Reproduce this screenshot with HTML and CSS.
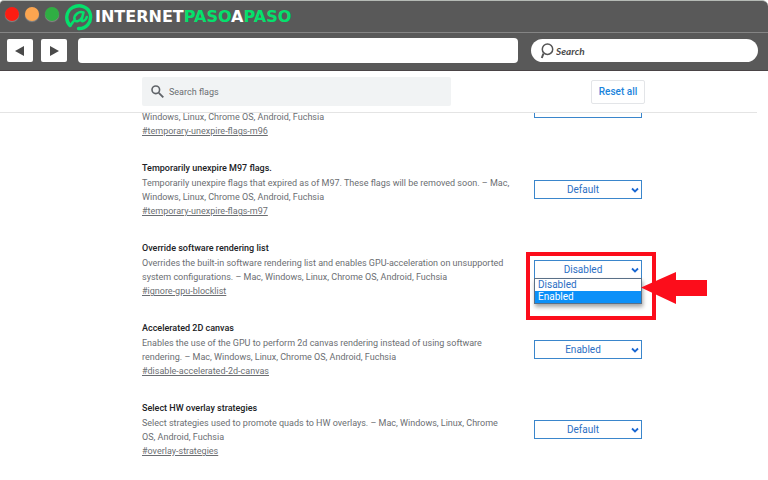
FILE: index.html
```
<!DOCTYPE html>
<html lang="en">
  <head>
    <meta charset="UTF-8" />
    <meta name="viewport" content="width=device-width, initial-scale=1.0" />
    <title>Experiments</title>
    <link rel="stylesheet" href="styles.css">
  </head>
  <body>
    <div class="browser">
      <div class="title-bar">
        <span class="dot red"></span>
        <span class="dot orange"></span>
        <span class="dot green"></span>
        <svg class="logo" viewBox="0 0 28 28" fill="none" stroke="#05e06c" stroke-linecap="round" stroke-linejoin="round">
          <path stroke-width="3.4" d="M5 22.500C0 17.500.8 8.500 7.500 4.600 14.500.8 23.500 3.400 25.300 11.200 27 19.500 21 25.800 13.500 25.500" />
          <path stroke-width="2.600" d="M18.500 9.500C14 7.500 9 11.800 9.400 16c.5 3.800 5.300 2.600 7.800-1.500l1.300-5-2 7.300c-.3 2.500 4.200 1.400 5.300-2.800M8.300 18.500L5.500 22.500" />
        </svg>
        <div class="brand">INTERNET<span class="paso">PASO</span>A<span class="paso">PASO</span></div>
      </div>
      <div class="nav-bar">
        <button class="nav-button" aria-label="Back">
          <svg viewBox="0 0 10 10"><path d="M0 5l9-5v10z" /></svg>
        </button>
        <button class="nav-button" aria-label="Forward">
          <svg viewBox="0 0 10 10"><path d="M10 5L1 0v10z" /></svg>
        </button>
        <input type="text" class="address" aria-label="Address" />
        <label class="web-search">
          <svg viewBox="0 0 14 16" fill="none" stroke="#555" stroke-width="1.5"><circle cx="7.500" cy="6.200" r="5.200" /><path stroke-width="2" d="M3.500 10.500L1.800 15" /></svg>
          <input type="text" placeholder="Search" aria-label="Search the web" />
        </label>
      </div>
    </div>

    <header class="flags-header">
      <label class="flags-search">
        <svg viewBox="0 0 13 13" fill="none" stroke="#5f6368" stroke-width="1.600"><circle cx="4.800" cy="4.800" r="3.800" /><path stroke-width="1.900" d="M7.800 7.800l4.500 4.500" /></svg>
        <input type="text" placeholder="Search flags" aria-label="Search flags" />
      </label>
      <button class="reset">Reset all</button>
    </header>

    <main class="flags">
      <div class="flag-list">
        <section class="flag scrolled">
          <div class="info">
            <p>Windows, Linux, Chrome OS, Android, Fuchsia</p>
            <a href="#temporary-unexpire-flags-m96">#temporary-unexpire-flags-m96</a>
          </div>
          <div class="picker">
            <select aria-label="Temporarily unexpire M96 flags"><option>Default</option><option>Enabled</option><option>Disabled</option></select>
          </div>
        </section>

        <section class="flag">
          <div class="info">
            <h2>Temporarily unexpire M97 flags.</h2>
            <p>Temporarily unexpire flags that expired as of M97. These flags will be removed soon. – Mac,<br />Windows, Linux, Chrome OS, Android, Fuchsia</p>
            <a href="#temporary-unexpire-flags-m97">#temporary-unexpire-flags-m97</a>
          </div>
          <div class="picker">
            <select aria-label="Temporarily unexpire M97 flags"><option>Default</option><option>Enabled</option><option>Disabled</option></select>
            <svg class="chevron" viewBox="0 0 8 6"><path d="M1 1.500l3 3 3-3" /></svg>
          </div>
        </section>

        <section class="flag">
          <div class="info">
            <h2>Override software rendering list</h2>
            <p>Overrides the built-in software rendering list and enables GPU-acceleration on unsupported<br />system configurations. – Mac, Windows, Linux, Chrome OS, Android, Fuchsia</p>
            <a href="#ignore-gpu-blocklist">#ignore-gpu-blocklist</a>
          </div>
          <div class="picker">
            <select aria-label="Override software rendering list"><option>Disabled</option><option>Enabled</option></select>
            <svg class="chevron" viewBox="0 0 8 6"><path d="M1 1.500l3 3 3-3" /></svg>
            <ul class="menu">
              <li>Disabled</li>
              <li class="active">Enabled</li>
            </ul>
            <div class="highlight"></div>
            <svg class="arrow" viewBox="0 0 66 32"><path fill="#fc0d1b" d="M0 15.500L35 0v8h31v16H35v8z" /></svg>
          </div>
        </section>

        <section class="flag">
          <div class="info">
            <h2>Accelerated 2D canvas</h2>
            <p>Enables the use of the GPU to perform 2d canvas rendering instead of using software<br />rendering. – Mac, Windows, Linux, Chrome OS, Android, Fuchsia</p>
            <a href="#disable-accelerated-2d-canvas">#disable-accelerated-2d-canvas</a>
          </div>
          <div class="picker">
            <select aria-label="Accelerated 2D canvas"><option>Enabled</option><option>Disabled</option></select>
            <svg class="chevron" viewBox="0 0 8 6"><path d="M1 1.500l3 3 3-3" /></svg>
          </div>
        </section>

        <section class="flag">
          <div class="info">
            <h2>Select HW overlay strategies</h2>
            <p>Select strategies used to promote quads to HW overlays. – Mac, Windows, Linux, Chrome<br />OS, Android, Fuchsia</p>
            <a href="#overlay-strategies">#overlay-strategies</a>
          </div>
          <div class="picker">
            <select aria-label="Select HW overlay strategies"><option>Default</option><option>Enabled</option><option>Disabled</option></select>
            <svg class="chevron" viewBox="0 0 8 6"><path d="M1 1.500l3 3 3-3" /></svg>
          </div>
        </section>
      </div>
    </main>
  </body>
</html>
```
FILE: styles.css
```
* {
  box-sizing: border-box;
}

body {
  margin: 0;
  background-color: #fff;
  font-family: Roboto, Arial, sans-serif;
  font-size: 9px;
  color: #6b6e72;
}

input,
select,
button {
  font-family: inherit;
  font-size: 10px;
}

input {
  border: none;
  outline: none;
  background: none;
  padding: 0;
  min-width: 0;
}

/* browser window */
.browser {
  background-color: #595959;
  border-top: 1px solid #b5bab5;
  border-bottom: 1px solid #4a4446;
  border-radius: 4px 6px 0 0;
}

.title-bar {
  display: flex;
  align-items: center;
  height: 32px;
  padding-left: 5px;
  border-bottom: 1px solid #858585;
}

.dot {
  width: 14px;
  height: 14px;
  margin: 0 6px 6px 0;
  border-radius: 50%;
  box-shadow: 0 1px 1px #8a8a8a;
}

.red {
  background-color: #fb1d12;
}

.orange {
  background-color: #fba550;
}

.green {
  background-color: #2fae43;
}

.logo {
  width: 28px;
  height: 28px;
}

.brand {
  margin-left: 2px;
  font-family: "DejaVu Sans", sans-serif;
  font-size: 16px;
  font-weight: bold;
  color: #fff;
}

.paso {
  color: #05e06c;
}

.nav-bar {
  display: flex;
  align-items: center;
  gap: 8px;
  height: 37px;
  padding: 0 10px 2px 7px;
}

.nav-button {
  display: flex;
  align-items: center;
  justify-content: center;
  width: 26px;
  height: 23px;
  padding: 0;
  border: none;
  border-radius: 2px;
  background-color: #fff;
}

.nav-button svg {
  width: 10px;
  height: 10px;
  fill: #4a4a4a;
}

.address {
  flex: 1;
  height: 25px;
  margin: 0 5px 0 3px;
  border-radius: 4px;
  background-color: #fff;
}

.web-search {
  display: flex;
  align-items: center;
  gap: 2px;
  width: 227px;
  height: 23px;
  padding-left: 9px;
  border-radius: 12px;
  background-color: #fff;
}

.web-search svg {
  width: 14px;
  height: 16px;
}

.web-search input {
  flex: 1;
  font-family: Lato, sans-serif;
  font-style: italic;
  font-weight: bold;
}

.web-search input::placeholder {
  color: #4a4a4a;
}

/* flags page */
.flags-header {
  position: relative;
  z-index: 1;
  display: flex;
  align-items: center;
  justify-content: space-between;
  max-width: 757px;
  height: 42px;
  padding: 0 112px 0 142px;
  border-bottom: 1px solid #e4e4e4;
  background-color: #fff;
}

.flags-search {
  display: flex;
  align-items: center;
  gap: 5px;
  width: 309px;
  height: 29px;
  padding-left: 9px;
  border-radius: 2px;
  background-color: #f1f3f4;
}

.flags-search svg {
  width: 13px;
  height: 13px;
}

.flags-search input {
  flex: 1;
  font-size: 9px;
}

.flags-search input::placeholder {
  color: #6b6e72;
}

.reset {
  width: 54px;
  height: 24px;
  padding: 0;
  border: 1px solid #e3e5e8;
  border-radius: 2px;
  background-color: #fff;
  color: #1a84dc;
  font-weight: 500;
}

.flags {
  overflow: hidden;
  max-width: 757px;
  padding: 0 115px 0 142px;
}

/* scrolled a little way down */
.flag-list {
  margin-top: -3px;
}

.flag {
  display: flex;
  align-items: center;
  gap: 10px;
  padding-bottom: 21px;
}

.scrolled .picker {
  align-self: flex-start;
  margin-top: -11px;
}

.info {
  flex: 1;
}

.info h2 {
  margin: 0;
  font-size: 9px;
  line-height: 16px;
  font-weight: 500;
  color: #202124;
}

.info p {
  margin: 0;
  line-height: 14px;
}

.info a {
  display: block;
  line-height: 15px;
  color: #6b6e72;
}

.picker {
  position: relative;
  width: 108px;
}

.picker select {
  display: block;
  appearance: none;
  width: 100%;
  height: 19px;
  padding: 0 14px 0 4px;
  border: 1px solid #3a86cc;
  border-radius: 0;
  background-color: #fff;
  color: #2c6fc4;
  text-align-last: center;
}

.chevron {
  position: absolute;
  top: 7px;
  right: 3px;
  width: 8px;
  height: 6px;
  fill: none;
  stroke: #1967d2;
  stroke-width: 1.8;
  pointer-events: none;
}

.menu {
  position: absolute;
  top: 18px;
  left: 0;
  width: 100%;
  margin: 0;
  padding: 0;
  border: 1px solid #5a7088;
  background-color: #fff;
  box-shadow: 1px 3px 4px rgba(0, 0, 0, 0.35);
  list-style: none;
  font-size: 10px;
  color: #2c6fc4;
}

.menu li {
  padding-left: 3px;
  line-height: 12px;
}

.menu .active {
  background-color: #0c90f8;
  color: #fff;
}

.highlight {
  position: absolute;
  top: -8px;
  left: -8px;
  width: 130px;
  height: 68px;
  border: 4px solid #fc0d1b;
}

.arrow {
  position: absolute;
  top: 12px;
  left: 107px;
  width: 66px;
  height: 32px;
}
```
